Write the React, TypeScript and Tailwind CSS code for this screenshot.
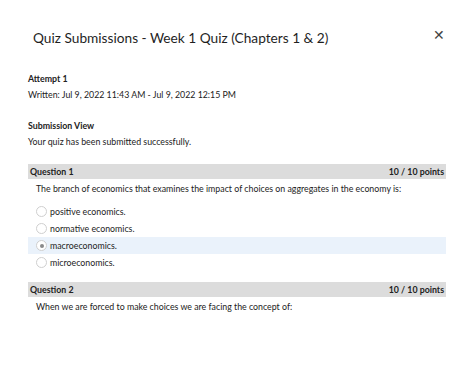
import React from "react";

const Radio = ({ checked }: { checked?: boolean }) => (
  <span className="flex h-[11px] w-[11px] shrink-0 items-center justify-center rounded-full border border-[#cfcfcf] bg-white">
    {checked && <span className="h-[4px] w-[4px] rounded-full bg-[#8a8a8a]" />}
  </span>
);

const Option = ({ label, checked }: { label: string; checked?: boolean }) => (
  <div className={`flex h-[17px] items-center gap-[3px] pl-[8px] ${checked ? "bg-[#eaf2fb]" : ""}`}>
    <Radio checked={checked} />
    <span>{label}</span>
  </div>
);

export default function App() {
  return (
    <div className="h-[366px] w-[474px] bg-white text-[#222]" style={{ fontFamily: "Lato, 'Liberation Sans', sans-serif" }}>
      <div className="flex items-center justify-between pl-[33px] pr-[29px] pt-[28px]">
        <h1 className="text-[13.7px] leading-[20px] text-[#1f1f1f]">Quiz Submissions - Week 1 Quiz (Chapters 1 &amp; 2)</h1>
        <span className="-mt-[7px] text-[14px] leading-[16px] text-[#444]">✕</span>
      </div>
      <div className="px-[28px] pt-[24px] text-[8.8px]">
        <div className="font-bold leading-[13px]">Attempt 1</div>
        <div className="mt-[3px] leading-[13px]">Written: Jul 9, 2022 11:43 AM - Jul 9, 2022 12:15 PM</div>
        <div className="mt-[18px] font-bold leading-[13px]">Submission View</div>
        <div className="mt-[3px] leading-[13px]">Your quiz has been submitted successfully.</div>

        <div className="mt-[16px] flex h-[15px] items-center justify-between bg-[#dcdcdc] px-[2px] font-bold">
          <span>Question 1</span>
          <span>10 / 10 points</span>
        </div>
        <div className="pl-[8px] pt-[3px] leading-[13px]">The branch of economics that examines the impact of choices on aggregates in the economy is:</div>
        <div className="mt-[8px] flex flex-col">
          <Option label="positive economics." />
          <Option label="normative economics." />
          <Option label="macroeconomics." checked />
          <Option label="microeconomics." />
        </div>

        <div className="mt-[11px] flex h-[15px] items-center justify-between bg-[#dcdcdc] px-[2px] font-bold">
          <span>Question 2</span>
          <span>10 / 10 points</span>
        </div>
        <div className="pl-[8px] pt-[3px] leading-[13px]">When we are forced to make choices we are facing the concept of:</div>
      </div>
    </div>
  );
}
